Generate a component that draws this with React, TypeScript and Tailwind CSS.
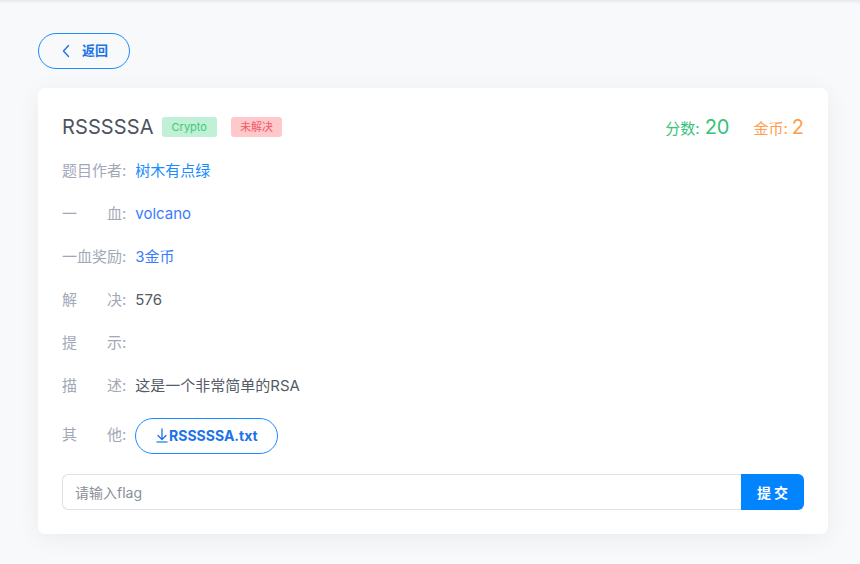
import React from "react";

const rows: { label: string; value: React.ReactNode; cls: string }[] = [
  { label: "题目作者", value: "树木有点绿", cls: "text-[#1a8cff]" },
  { label: "一血", value: "volcano", cls: "text-[#3a7bff]" },
  { label: "一血奖励", value: "3金币", cls: "text-[#3a7bff]" },
  { label: "解决", value: "576", cls: "text-[#555a66]" },
  { label: "提示", value: "", cls: "text-[#555a66]" },
  { label: "描述", value: "这是一个非常简单的RSA", cls: "text-[#555a66]" },
];

function Label({ text }: { text: string }) {
  return (
    <div className="flex shrink-0 text-[#a3a8b8] whitespace-nowrap">
      <span className="w-[60px] [text-align-last:justify]">{text}</span>
      <span>:</span>
    </div>
  );
}

export default function App() {
  return (
    <div
      className="w-[860px] h-[564px] bg-[#f8f9fb] relative overflow-hidden"
      style={{ fontFamily: 'Inter, "Noto Sans CJK SC", sans-serif' }}
    >
      <div className="absolute top-0 left-0 right-0 h-[4px] bg-gradient-to-b from-[#e6e8ec] to-transparent" />
      <div className="pl-[38px] pt-[33px]">
        <button className="flex items-center w-[92px] h-[36px] rounded-full border border-[#1a8cff] text-[#1a73e8] text-[13px] font-bold pl-[22px]">
          <svg width="10" height="14" viewBox="0 0 10 14" fill="none" className="mr-[11px]">
            <path d="M7.5 1.5 L2.5 7 L7.5 12.5" stroke="#1a73e8" strokeWidth="1.4" strokeLinecap="round" strokeLinejoin="round" />
          </svg>
          返回
        </button>
        <div className="mt-[19px] w-[790px] h-[446px] bg-white rounded-[7px] shadow-[0_4px_24px_rgba(0,0,0,0.06)] px-[24px] pt-[24px]">
          <div className="flex items-center h-[30px]">
            <span className="text-[20px] text-[#4d535e] tracking-[0.1px]">RSSSSSA</span>
            <span className="ml-[8px] h-[20px] px-[10px] rounded-[3px] bg-[#c1f0d6] text-[#3ec97a] text-[11px] flex items-center">Crypto</span>
            <span className="ml-[14px] h-[20px] px-[9px] rounded-[3px] bg-[#ffc9cc] text-[#f25c67] text-[11px] flex items-center">未解决</span>
            <div className="ml-auto flex items-baseline">
              <span className="text-[#35c27a] text-[15px]">分数:</span>
              <span className="text-[#35c27a] text-[20px] ml-[5px]">20</span>
              <span className="text-[#ff9d4d] text-[15px] ml-[24px]">金币:</span>
              <span className="text-[#ff9d4d] text-[20px] ml-[4px]">2</span>
            </div>
          </div>
          <div className="mt-[8px] text-[15px]">
            {rows.map((r) => (
              <div key={r.label} className="flex items-center h-[43px]">
                <Label text={r.label} />
                <span className={`ml-[9px] ${r.cls}`}>{r.value}</span>
              </div>
            ))}
            <div className="flex items-center h-[49px] mt-[3px]">
              <Label text="其他" />
              <button className="ml-[9px] h-[36px] w-[143px] rounded-full border border-[#1a8cff] flex items-center justify-center text-[#1a73e8] font-bold text-[14px]">
                <svg width="12" height="15" viewBox="0 0 12 15" fill="none" className="mr-[1px]">
                  <path d="M6 1 V11 M2 7.5 L6 11.5 L10 7.5" stroke="#1a73e8" strokeWidth="1.3" strokeLinecap="round" strokeLinejoin="round" />
                  <path d="M0.5 14 H11.5" stroke="#1a73e8" strokeWidth="1.2" />
                </svg>
                RSSSSSA.txt
              </button>
            </div>
          </div>
          <div className="mt-[14px] flex h-[36px]">
            <div className="flex-1 border border-[#dfe1e6] border-r-0 rounded-l-[6px] flex items-center pl-[12px] text-[14px] text-[#8a8f99]">
              请输入flag
            </div>
            <button className="w-[63px] bg-[#0284ff] rounded-r-[6px] text-white font-bold text-[14px] tracking-[3px] pl-[3px]">
              提交
            </button>
          </div>
        </div>
      </div>
    </div>
  );
}
